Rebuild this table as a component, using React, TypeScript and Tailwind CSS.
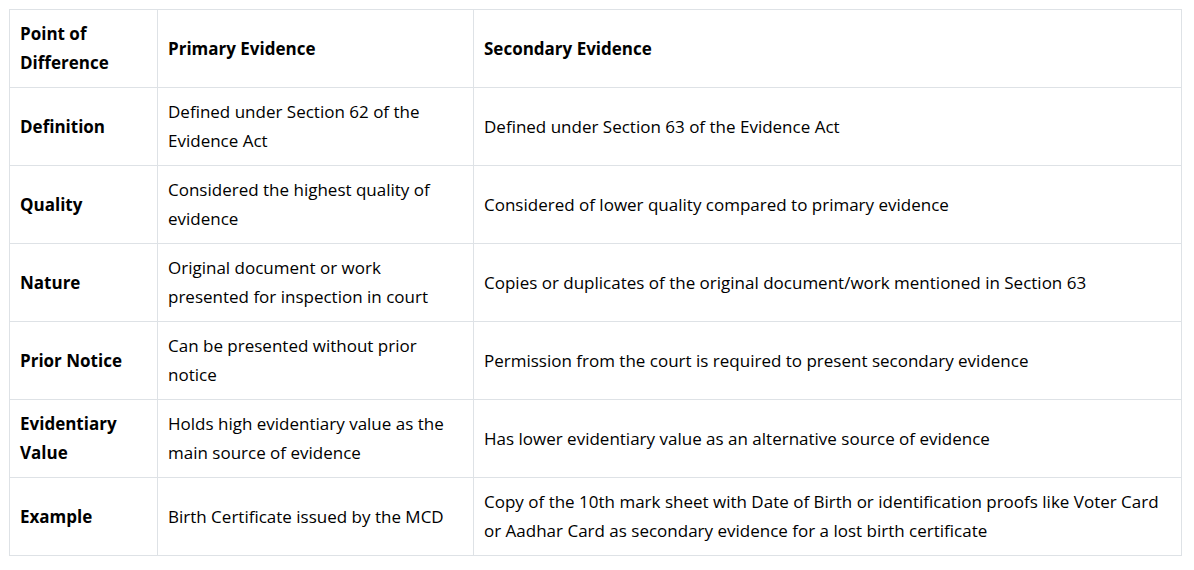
import React from "react";

const rows: [string, string, string][] = [
  ["Definition", "Defined under Section 62 of the Evidence Act", "Defined under Section 63 of the Evidence Act"],
  ["Quality", "Considered the highest quality of evidence", "Considered of lower quality compared to primary evidence"],
  ["Nature", "Original document or work presented for inspection in court", "Copies or duplicates of the original document/work mentioned in Section 63"],
  ["Prior Notice", "Can be presented without prior notice", "Permission from the court is required to present secondary evidence"],
  ["Evidentiary Value", "Holds high evidentiary value as the main source of evidence", "Has lower evidentiary value as an alternative source of evidence"],
  ["Example", "Birth Certificate issued by the MCD", "Copy of the 10th mark sheet with Date of Birth or identification proofs like Voter Card or Aadhar Card as secondary evidence for a lost birth certificate"],
];

const cell = "border border-[#dee2e6] px-[10px] py-[9.5px] align-middle text-left";

export default function App() {
  return (
    <div className="w-[1194px] h-[570px] bg-white pt-[8.5px] pl-[9px]" style={{ fontFamily: '"Open Sans", "Noto Sans", sans-serif' }}>
      <table className="w-[1172px] border-collapse text-[17px] leading-[29px] text-black table-fixed">
        <colgroup>
          <col className="w-[148px]" />
          <col className="w-[316px]" />
          <col className="w-[708px]" />
        </colgroup>
        <thead>
          <tr className="h-[78px]">
            <th className={cell + " font-bold"}>Point of Difference</th>
            <th className={cell + " font-bold"}>Primary Evidence</th>
            <th className={cell + " font-bold"}>Secondary Evidence</th>
          </tr>
        </thead>
        <tbody>
          {rows.map((r) => (
            <tr key={r[0]} className="h-[78px]">
              <td className={cell + " font-bold"}>{r[0]}</td>
              <td className={cell}>{r[1]}</td>
              <td className={cell}>{r[2]}</td>
            </tr>
          ))}
        </tbody>
      </table>
    </div>
  );
}
